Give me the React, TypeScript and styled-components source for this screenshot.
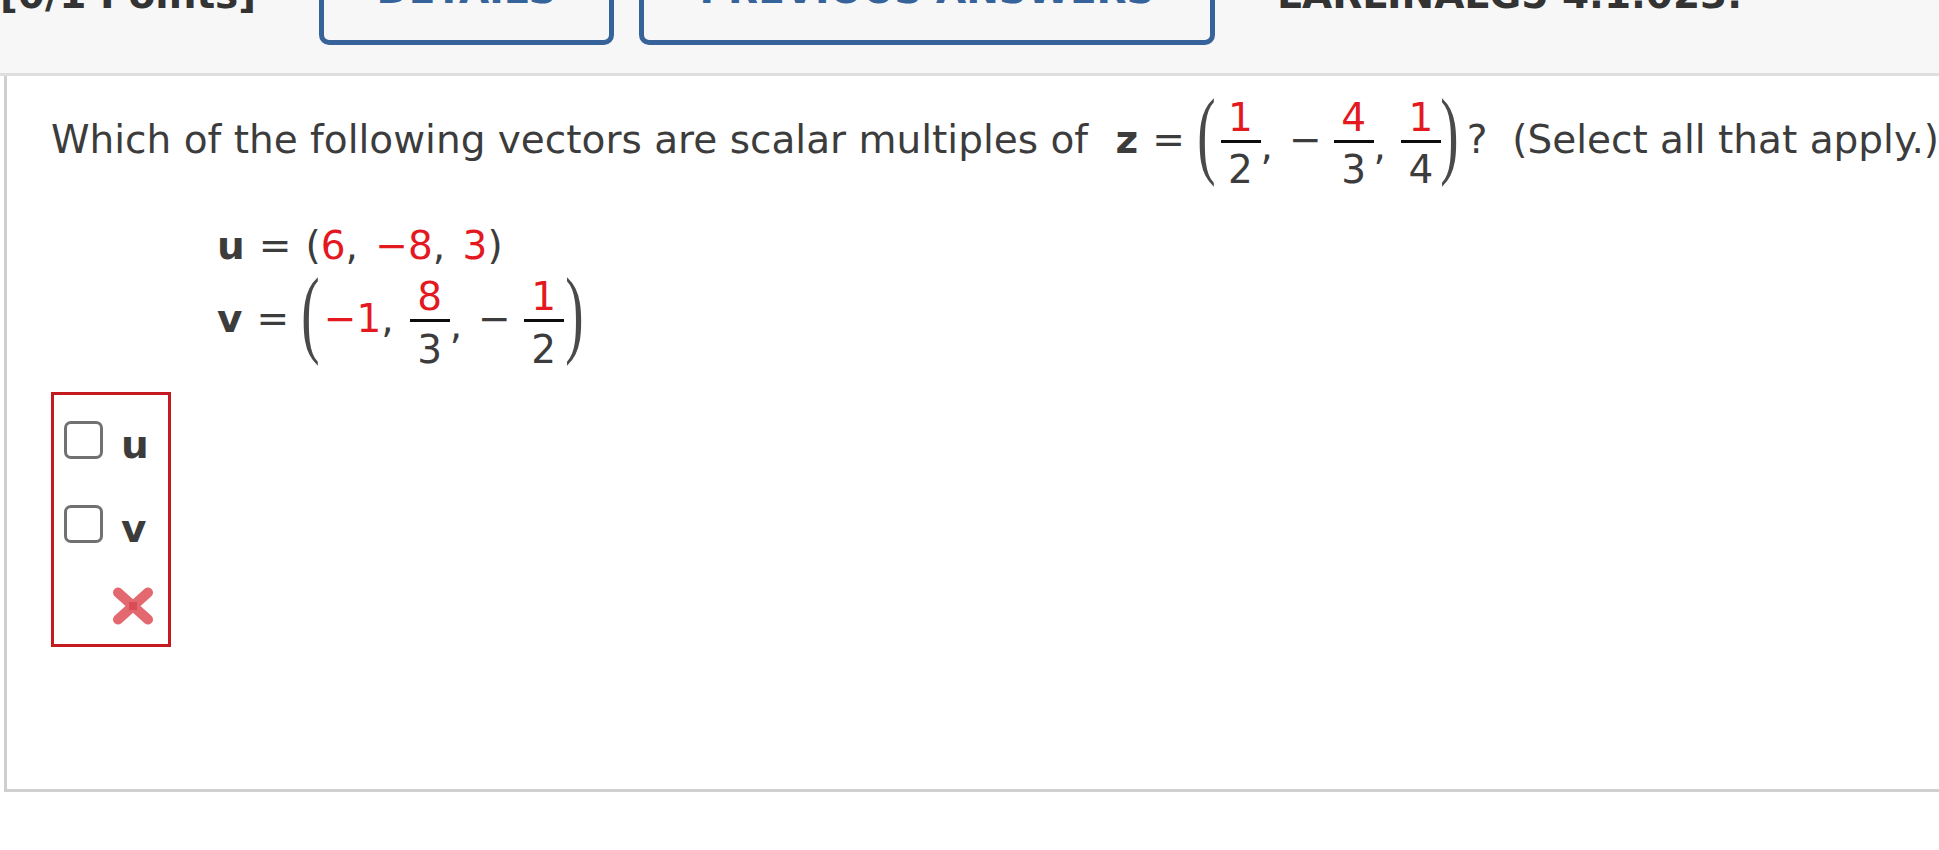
import React from "react";
import styled, { createGlobalStyle } from "styled-components";

const RED = "#e3191f";
const INK = "#3c3c3c";
const BLUE = "#36639a";

const GlobalStyle = createGlobalStyle`
  html, body {
    margin: 0;
    padding: 0;
    background: #fff;
    overflow: hidden;
  }
  body {
    font-family: Verdana, "DejaVu Sans", sans-serif;
    color: ${INK};
  }
`;

const Page = styled.div`
  width: 1939px;
  height: 850px;
  overflow: hidden;
`;

/* top bar, scrolled so that only its lower part shows */
const Header = styled.header`
  display: flex;
  align-items: flex-end;
  height: 45px;
  padding-bottom: 28px;
  background: #f7f7f7;
  border-bottom: 3px solid #dfdfdf;
  overflow: hidden;
`;

const HeaderText = styled.div<{ $ml?: number }>`
  font-size: 39px;
  font-weight: bold;
  line-height: 40px;
  color: #333;
  white-space: nowrap;
  margin-left: ${({ $ml }) => $ml ?? 0}px;
  margin-bottom: 30px;
`;

const HeaderButton = styled.div<{ $w: number; $ml: number }>`
  box-sizing: border-box;
  width: ${({ $w }) => $w}px;
  height: 110px;
  margin-left: ${({ $ml }) => $ml}px;
  flex-shrink: 0;
  display: flex;
  align-items: flex-end;
  justify-content: center;
  padding-bottom: 30px;
  border: 5px solid ${BLUE};
  border-radius: 10px;
  color: ${BLUE};
  font-size: 39px;
  font-weight: bold;
  line-height: 40px;
  white-space: nowrap;
`;

const Panel = styled.section`
  box-sizing: border-box;
  height: 716px;
  margin-left: 4px;
  padding: 26.5px 0 0 44px;
  border-left: 3px solid #cfcfcf;
  border-bottom: 3px solid #cfcfcf;
`;

const Question = styled.div`
  font-size: 39px;
  white-space: nowrap;
`;

const Bold = styled.span<{ $ml?: number }>`
  font-weight: bold;
  margin-left: ${({ $ml }) => $ml ?? 0}px;
`;

const Op = styled.span`
  margin: 0 14px;
`;

const Red = styled.span`
  color: ${RED};
`;

const Minus = styled.span<{ $ml?: number; $mr?: number; $red?: boolean }>`
  margin-left: ${({ $ml }) => $ml ?? 0}px;
  margin-right: ${({ $mr }) => $mr ?? 0}px;
  color: ${({ $red }) => ($red ? RED : INK)};
`;

/* comma that follows a fraction sits a little lower */
const FracComma = styled.span`
  vertical-align: -6px;
`;

const BigParen = styled.span<{ $ml?: number; $mr?: number }>`
  display: inline-block;
  font-family: "Liberation Serif", "Times New Roman", serif;
  font-size: 44px;
  color: #4a4a4a;
  transform: scale(1.25, 2.22);
  transform-origin: 50% 29.6px;
  margin-left: ${({ $ml }) => $ml ?? 0}px;
  margin-right: ${({ $mr }) => $mr ?? 0}px;
`;

const FracBox = styled.span<{ $ml?: number }>`
  display: inline-flex;
  flex-direction: column;
  width: 40px;
  vertical-align: 22px;
  text-align: center;
  margin-left: ${({ $ml }) => $ml ?? 0}px;
`;

const FracNum = styled.span`
  display: block;
  line-height: 30px;
  color: ${RED};
`;

const FracBar = styled.span`
  display: block;
  height: 3px;
  margin-top: 7px;
  background: #0d0d0d;
`;

const FracDen = styled.span`
  display: block;
  line-height: 30px;
  margin-top: 12.5px;
  color: ${INK};
`;

const VectorBlock = styled.div`
  margin-top: 38px;
  padding-left: 166px;
  font-size: 39px;
  white-space: nowrap;
`;

const VectorLine = styled.div<{ $mt?: number; $ws?: number }>`
  margin-top: ${({ $mt }) => $mt ?? 0}px;
  word-spacing: ${({ $ws }) => $ws ?? 0}px;
`;

const AnswerBox = styled.div`
  box-sizing: border-box;
  width: 120px;
  margin-top: 27px;
  padding: 26px 0 19px 10px;
  border: 3px solid #c51a1f;
`;

const ChoiceRow = styled.label<{ $mb: number }>`
  display: flex;
  align-items: flex-start;
  gap: 18px;
  height: 38px;
  margin-bottom: ${({ $mb }) => $mb}px;
`;

const Box = styled.span`
  box-sizing: border-box;
  width: 39px;
  height: 38px;
  border: 3px solid #717171;
  border-radius: 7px;
  background: #fff;
  flex-shrink: 0;
`;

const ChoiceLabel = styled.span`
  margin-top: 5px;
  font-size: 39px;
  font-weight: bold;
  line-height: 38px;
  color: ${INK};
`;

const MarkRow = styled.div`
  height: 38px;
  padding-left: 48px;
`;

const Frac: React.FC<{ n: string; d: string; ml?: number }> = ({ n, d, ml }) => (
  <FracBox $ml={ml}>
    <FracNum>{n}</FracNum>
    <FracBar />
    <FracDen>{d}</FracDen>
  </FracBox>
);

const WrongMark = () => (
  <svg width="42" height="38" viewBox="0 0 42 38">
    <g stroke="#e1545c" strokeWidth="10" strokeLinecap="round" opacity="0.88">
      <line x1="6" y1="5.5" x2="36" y2="32.5" />
      <line x1="36" y1="5.5" x2="6" y2="32.5" />
    </g>
    <rect x="17" y="15" width="8" height="8" fill="#d43a44" opacity="0.6" />
  </svg>
);

const App: React.FC = () => {
  return (
    <Page>
      <GlobalStyle />
      <Header>
        <HeaderText>[0/1 Points]</HeaderText>
        <HeaderButton $w={295} $ml={63}>DETAILS</HeaderButton>
        <HeaderButton $w={576} $ml={25}>PREVIOUS ANSWERS</HeaderButton>
        <HeaderText $ml={62}>LARLINALG5 4.1.023.</HeaderText>
      </Header>
      <Panel>
        <Question>
          Which of the following vectors are scalar multiples of <Bold $ml={15}>z</Bold>
          <Op>=</Op>
          <BigParen $mr={7}>(</BigParen>
          <Frac n="1" d="2" />
          <FracComma>,</FracComma>
          <Minus $ml={16}>−</Minus>
          <Frac n="4" d="3" ml={12} />
          <FracComma>,</FracComma>
          <Frac n="1" d="4" ml={15} />
          <BigParen $ml={1} $mr={10}>)</BigParen>?&nbsp; (Select all that apply.)
        </Question>
        <VectorBlock>
          <VectorLine $ws={5}>
            <Bold>u</Bold>
            <Op>=</Op>(<Red>6</Red>, <Red>−8</Red>, <Red>3</Red>)
          </VectorLine>
          <VectorLine $mt={14}>
            <Bold>v</Bold>
            <Op>=</Op>
            <BigParen $mr={6}>(</BigParen>
            <Red>−1</Red>,
            <Frac n="8" d="3" ml={16} />
            <FracComma>,</FracComma>
            <Minus $ml={16}>−</Minus>
            <Frac n="1" d="2" ml={13} />
            <BigParen $ml={3}>)</BigParen>
          </VectorLine>
        </VectorBlock>
        <AnswerBox>
          <ChoiceRow $mb={46}>
            <Box />
            <ChoiceLabel>u</ChoiceLabel>
          </ChoiceRow>
          <ChoiceRow $mb={44}>
            <Box />
            <ChoiceLabel>v</ChoiceLabel>
          </ChoiceRow>
          <MarkRow>
            <WrongMark />
          </MarkRow>
        </AnswerBox>
      </Panel>
    </Page>
  );
};

export default App;
